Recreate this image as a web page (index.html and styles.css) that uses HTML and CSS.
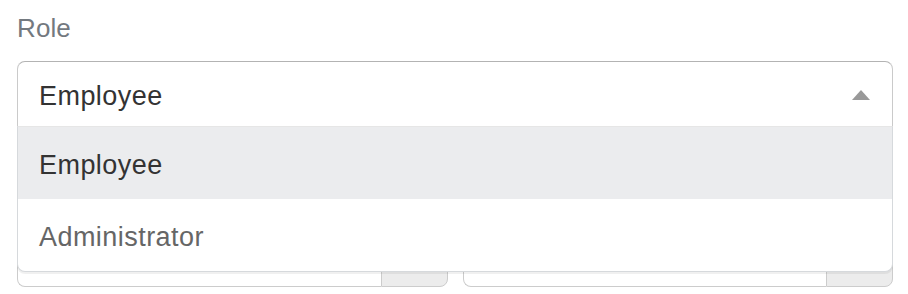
FILE: index.html
```html
<!DOCTYPE html>
<html lang="en">
<head>
<meta charset="utf-8">
<title>Role</title>
<link rel="stylesheet" href="styles.css">
</head>
<body>
<div class="page">
  <div class="form-group">
    <label class="label">Role</label>
    <div class="select is-open">
      <div class="control">
        <span class="value">Employee</span>
        <span class="arrow"></span>
      </div>
      <div class="menu">
        <div class="option is-focused">Employee</div>
        <div class="option">Administrator</div>
      </div>
    </div>
  </div>
  <div class="row">
    <div class="input-group">
      <div class="input"></div>
      <div class="addon"></div>
    </div>
    <div class="input-group">
      <div class="input"></div>
      <div class="addon"></div>
    </div>
  </div>
</div>
</body>
</html>
```

FILE: styles.css
```css
html, body {
  margin: 0;
  padding: 0;
  background: #ffffff;
}

body {
  font-family: "Liberation Sans", Arial, Helvetica, sans-serif;
  width: 908px;
  height: 294px;
  overflow: hidden;
}

.page {
  padding: 13px 15px 0 17px;
}

.label {
  display: block;
  font-size: 26px;
  line-height: 30px;
  color: #73797f;
  margin-bottom: 18px;
  letter-spacing: 0.1px;
}

.select {
  position: relative;
}

.control {
  box-sizing: border-box;
  height: 66px;
  border: 1px solid #cacaca;
  border-top-color: #b3b3b3;
  border-radius: 8px 8px 0 0;
  display: flex;
  align-items: flex-start;
  justify-content: space-between;
  padding: 5px 22px 0 21px;
  background: #fff;
}

.value {
  font-size: 27px;
  line-height: 59px;
  color: #333333;
  letter-spacing: 0.45px;
}

.arrow {
  width: 0;
  height: 0;
  border-style: solid;
  border-width: 0 9.5px 10px 9.5px;
  border-color: transparent transparent #999999 transparent;
  margin-top: 23px;
}

.menu {
  position: absolute;
  left: 0;
  right: 0;
  top: 65px;
  background: #fff;
  border: 1px solid #d6d9dc;
  border-top-color: #e6e6e6;
  border-radius: 0 0 8px 8px;
  box-shadow: 0 2px 0 rgba(0, 0, 0, 0.06);
  overflow: hidden;
  z-index: 2;
}

.option {
  height: 72px;
  box-sizing: border-box;
  padding: 4px 21px 0 21px;
  font-size: 27px;
  line-height: 68px;
  color: #666666;
  letter-spacing: 0.45px;
}

.option.is-focused {
  background: #ebecee;
  color: #333333;
}

.row {
  display: flex;
  gap: 15px;
  margin-top: 94px;
}

.input-group {
  flex: 1;
  display: flex;
  height: 66px;
}

.input {
  flex: 1;
  box-sizing: border-box;
  border: 1px solid #cccccc;
  border-right: none;
  border-radius: 8px 0 0 8px;
  background: #fff;
}

.addon {
  width: 67px;
  box-sizing: border-box;
  border: 1px solid #cccccc;
  border-radius: 0 8px 8px 0;
  background: #ececec;
}
```
